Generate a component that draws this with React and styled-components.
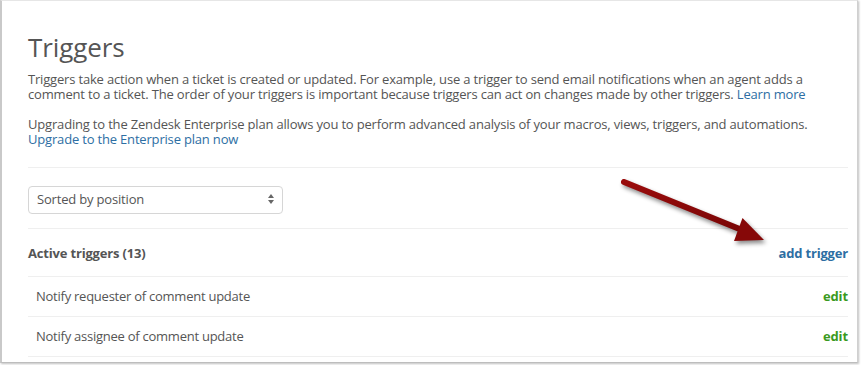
import React from "react";
import styled, { createGlobalStyle } from "styled-components";

const Global = createGlobalStyle`
  html, body { margin: 0; padding: 0; background: #ffffff; }
  body { font-family: "Open Sans", "DejaVu Sans", sans-serif; color: #555555; letter-spacing: -0.18px; }
  * { box-sizing: border-box; }
`;

const Frame = styled.div`
  position: relative;
  width: 861px;
  height: 365px;
  overflow: hidden;
  background: #ffffff;
`;

const Card = styled.div`
  width: 858px;
  height: 363px;
  background: #ffffff;
  border-left: 2px solid #c9c9c9;
  border-top: 1px solid #e6e6e6;
  border-right: 1px solid #d0d0d0;
  border-bottom: 1px solid #bdbdbd;
  box-shadow: 1px 1px 2px rgba(0, 0, 0, 0.25);
  padding: 0 9px 0 26px;
  display: flex;
  flex-direction: column;
`;

const Intro = styled.section`
  padding: 31px 0 20px;
  border-bottom: 1px solid #efefef;
`;

const Title = styled.h1`
  margin: 0 0 10px;
  font-size: 26px;
  line-height: 30px;
  font-weight: 400;
  color: #555555;
  letter-spacing: -0.1px;
`;

const Para = styled.p`
  margin: 0 0 ${(p) => (p.$last ? "0" : "15px")};
  font-size: 13px;
  line-height: 15px;
  color: #555555;
  white-space: nowrap;
`;

const Link = styled.a`
  color: #2d6ea3;
  text-decoration: none;
  font-weight: ${(p) => (p.$bold ? 700 : 400)};
`;

const FilterBar = styled.section`
  padding: 18px 0 14px;
  border-bottom: 1px solid #efefef;
`;

const SelectBox = styled.div`
  width: 255px;
  height: 28px;
  border: 1px solid #d6d6d6;
  border-radius: 4px;
  display: flex;
  align-items: center;
  justify-content: space-between;
  padding: 0 7px 2px 8px;
  font-size: 13px;
  color: #555555;
`;

const ListHeader = styled.div`
  height: 48px;
  display: flex;
  align-items: center;
  justify-content: space-between;
  border-bottom: 1px solid #efefef;
  font-size: 13px;
  font-weight: 700;
  color: #555555;
`;

const Row = styled.div`
  height: 40px;
  display: flex;
  align-items: center;
  justify-content: space-between;
  border-bottom: 1px solid #efefef;
  padding: 0 0 2px 8px;
  font-size: 13px;
  color: #555555;
  letter-spacing: -0.25px;
`;

const Edit = styled.a`
  color: #3a9a1e;
  font-weight: 700;
  text-decoration: none;
  letter-spacing: -0.1px;
`;

const ArrowLayer = styled.svg`
  position: absolute;
  left: 0;
  top: 0;
  pointer-events: none;
  filter: drop-shadow(2px 3px 2px rgba(0, 0, 0, 0.45));
`;

const Stepper = () => (
  <svg width="8" height="12" viewBox="0 0 8 12">
    <path d="M4 1 L7 5 L1 5 Z" fill="#666" />
    <path d="M4 11 L7 7 L1 7 Z" fill="#666" />
  </svg>
);

export default function App() {
  return (
    <>
      <Global />
      <Frame>
        <Card>
          <Intro>
            <Title>Triggers</Title>
            <Para>
              Triggers take action when a ticket is created or updated. For example, use a trigger to send email notifications when an agent adds a
              <br />
              comment to a ticket. The order of your triggers is important because triggers can act on changes made by other triggers.{" "}
              <Link href="#">Learn more</Link>
            </Para>
            <Para $last>
              Upgrading to the Zendesk Enterprise plan allows you to perform advanced analysis of your macros, views, triggers, and automations.
              <br />
              <Link href="#">Upgrade to the Enterprise plan now</Link>
            </Para>
          </Intro>
          <FilterBar>
            <SelectBox>
              <span>Sorted by position</span>
              <Stepper />
            </SelectBox>
          </FilterBar>
          <ListHeader>
            <span>Active triggers (13)</span>
            <Link href="#" $bold>add trigger</Link>
          </ListHeader>
          <Row>
            <span>Notify requester of comment update</span>
            <Edit href="#">edit</Edit>
          </Row>
          <Row>
            <span>Notify assignee of comment update</span>
            <Edit href="#">edit</Edit>
          </Row>
        </Card>
        <ArrowLayer width="861" height="365" viewBox="0 0 861 365">
          <defs>
            <linearGradient id="ar" x1="0" y1="0" x2="0" y2="1">
              <stop offset="0" stopColor="#9a0c0c" />
              <stop offset="1" stopColor="#7a0606" />
            </linearGradient>
          </defs>
          <line x1="624" y1="182" x2="742" y2="230" stroke="url(#ar)" strokeWidth="6" strokeLinecap="round" />
          <polygon points="764,240 742.5,218 734,241" fill="#860808" />
        </ArrowLayer>
      </Frame>
    </>
  );
}
